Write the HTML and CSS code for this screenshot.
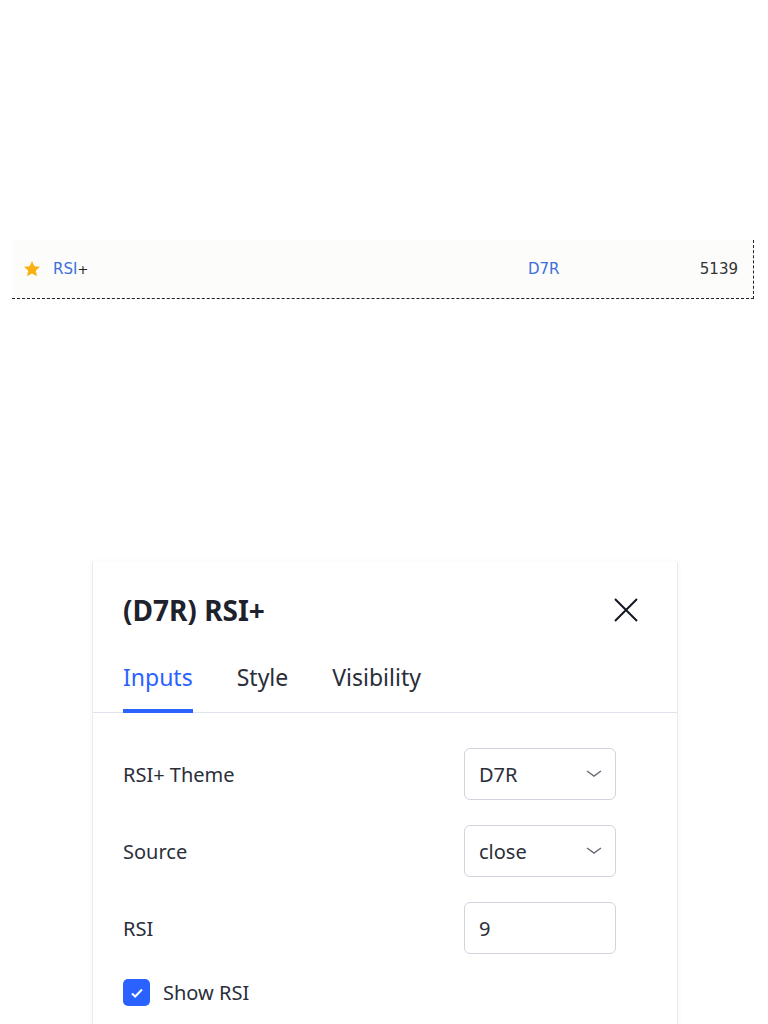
FILE: index.html
```
<!DOCTYPE html>
<html lang="en">
<head>
    <meta charset="UTF-8">
    <meta name="viewport" content="width=device-width, initial-scale=1.0">
    <title>RSI+ Settings</title>
    <link rel="stylesheet" href="styles.css">
</head>
<body>
    <div class="script-row">
        <div class="script-name">
            <svg class="star" width="20" height="20" viewBox="0 0 24 24">
                <path d="M12 2.5l2.9 6.1 6.6.8-4.9 4.6 1.3 6.6L12 17.3l-5.9 3.3 1.3-6.6-4.9-4.6 6.6-.8z" fill="#f9b115"/>
            </svg>
            <span class="name-link">RSI</span><span class="name-plus">+</span>
        </div>
        <div class="script-author">D7R</div>
        <div class="script-count">5139</div>
    </div>

    <div class="dialog">
        <div class="dialog-header">
            <div class="dialog-title">(D7R) RSI+</div>
            <button class="close-btn" type="button">
                <svg width="26" height="26" viewBox="0 0 26 26">
                    <path d="M2 2L24 24M24 2L2 24" stroke="#131722" stroke-width="2" fill="none"/>
                </svg>
            </button>
        </div>
        <div class="tabs">
            <div class="tab active">Inputs</div>
            <div class="tab">Style</div>
            <div class="tab">Visibility</div>
        </div>
        <div class="dialog-body">
            <div class="field-row">
                <label class="field-label">RSI+ Theme</label>
                <div class="field select">
                    <span>D7R</span>
                    <svg width="18" height="10" viewBox="0 0 18 10"><path d="M2 2l7 5 7-5" stroke="#6a6d78" stroke-width="1.5" fill="none"/></svg>
                </div>
            </div>
            <div class="field-row">
                <label class="field-label">Source</label>
                <div class="field select">
                    <span>close</span>
                    <svg width="18" height="10" viewBox="0 0 18 10"><path d="M2 2l7 5 7-5" stroke="#6a6d78" stroke-width="1.5" fill="none"/></svg>
                </div>
            </div>
            <div class="field-row">
                <label class="field-label">RSI</label>
                <div class="field">
                    <span>9</span>
                </div>
            </div>
            <div class="check-row">
                <span class="checkbox">
                    <svg width="16" height="16" viewBox="0 0 16 16"><path d="M3 8.5l3.2 3L13 4.5" stroke="#fff" stroke-width="2" fill="none"/></svg>
                </span>
                <span class="check-label">Show RSI</span>
            </div>
        </div>
    </div>
</body>
</html>
```

FILE: styles.css
```
body {
    margin: 0;
    background: #fff;
    font-family: "Noto Sans", sans-serif;
    color: #131722;
}
.script-row {
    margin: 240px 0 0 12px;
    width: 741px;
    height: 58px;
    display: flex;
    align-items: center;
    background: #fcfcfb;
    border-right: 1px dashed #222;
    border-bottom: 1px dashed #222;
    font-family: "DejaVu Sans", Verdana, sans-serif;
    font-size: 15px;
}
.script-name {
    display: flex;
    align-items: center;
    padding-left: 10px;
    width: 506px;
}
.star {
    margin-right: 11px;
}
.name-link {
    color: #3b6fe0;
}
.name-plus {
    color: #222;
    font-size: 13px;
}
.script-author {
    color: #3b6fe0;
    width: 160px;
}
.script-count {
    color: #333;
    flex: 1;
    text-align: right;
    padding-right: 15px;
}
.dialog {
    margin: 263px 0 0 92px;
    width: 584px;
    height: 470px;
    border-left: 1px solid #ebebeb;
    border-right: 1px solid #ebebeb;
    box-shadow: 0 0 6px rgba(0, 0, 0, 0.04);
}
.dialog-header {
    display: flex;
    align-items: center;
    justify-content: space-between;
    padding: 32px 38px 0 30px;
    height: 32px;
}
.dialog-title {
    font-size: 28px;
    font-weight: 700;
    color: #1e222d;
}
.close-btn {
    background: none;
    border: none;
    padding: 0;
    display: flex;
}
.tabs {
    display: flex;
    gap: 44px;
    padding: 37px 30px 0;
    border-bottom: 1px solid #e0e3eb;
}
.tab {
    font-size: 23px;
    line-height: 28px;
    padding-bottom: 18px;
    border-bottom: 4px solid transparent;
    margin-bottom: -1px;
    color: #2a2e39;
}
.tab.active {
    color: #2962ff;
    border-bottom-color: #2962ff;
}
.dialog-body {
    padding: 35px 61px 0 30px;
    display: flex;
    flex-direction: column;
    gap: 25px;
}
.field-row {
    display: flex;
    align-items: center;
    justify-content: space-between;
}
.field-label {
    font-size: 20px;
    color: #2a2e39;
}
.field {
    box-sizing: border-box;
    width: 152px;
    height: 52px;
    border: 1px solid #d1d4dc;
    border-radius: 6px;
    display: flex;
    align-items: center;
    justify-content: space-between;
    padding: 0 12px 0 14px;
    font-size: 20px;
    color: #2a2e39;
}
.check-row {
    display: flex;
    align-items: center;
    gap: 13px;
}
.checkbox {
    width: 27px;
    height: 27px;
    border-radius: 5px;
    background: #2962ff;
    display: flex;
    align-items: center;
    justify-content: center;
}
.check-label {
    font-size: 20px;
    color: #2a2e39;
}
```
